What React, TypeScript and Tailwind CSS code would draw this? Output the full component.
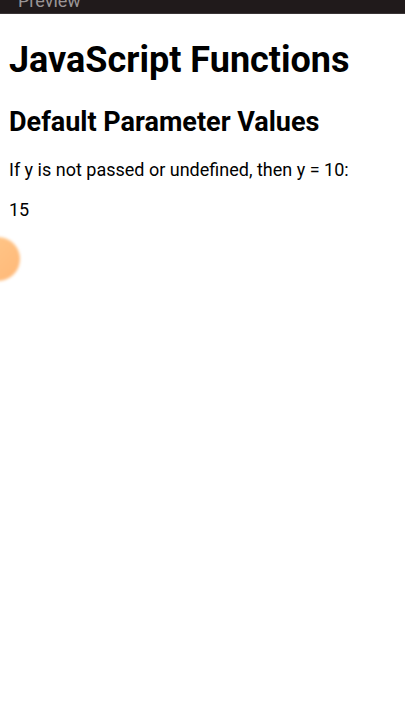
export default function App() {
  return (
    <div className="relative min-h-[720px] w-[405px] overflow-hidden bg-white font-['Roboto',sans-serif] text-black">
      {/* Top bar */}
      <div className="h-[14px] overflow-hidden border-b border-[#3a3536] bg-[#201a1b]">
        <div className="-mt-[11px] pl-[18px] text-[18px] leading-[24px] text-[#9a9596]">Preview</div>
      </div>

      <div className="px-[9px]">
        <h1 className="mt-[25px] text-[36px] font-bold leading-[42px]">JavaScript Functions</h1>
        <h2 className="mt-[25px] text-[27px] font-bold leading-[32px]">Default Parameter Values</h2>
        <p className="mt-[20px] text-[18px] leading-[24px]">If y is not passed or undefined, then y = 10:</p>
        <p className="mt-[16px] text-[18px] leading-[24px]">15</p>
      </div>

      {/* Floating orange bubble */}
      <div className="absolute left-[-24px] top-[237px] h-[44px] w-[44px] rounded-full bg-gradient-to-br from-[#ffc88a] to-[#ffb878] blur-[1.5px]" />
    </div>
  );
}
